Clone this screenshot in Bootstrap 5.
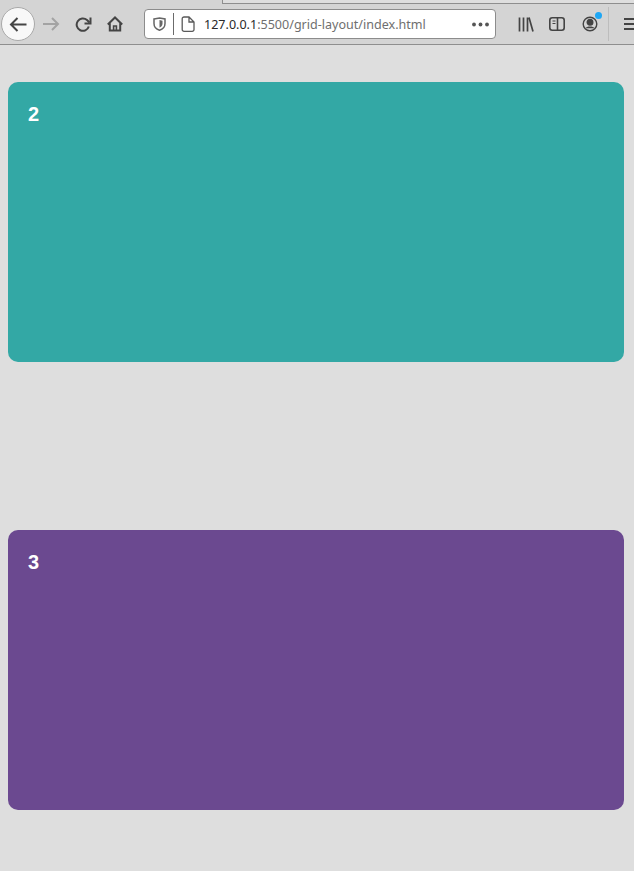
<!DOCTYPE html>
<html lang="en">
<head>
<meta charset="utf-8">
<title>Grid layout</title>
<link rel="stylesheet" href="https://cdn.jsdelivr.net/npm/bootstrap@5.3.0/dist/css/bootstrap.min.css">
<style>
html,body{height:100%;overflow:hidden}
body{background:#dedede;font-family:"Liberation Sans",sans-serif}
.chrome-bar{height:45px;background:#d4d4d4;border-bottom:1px solid #8e8e8e;position:relative;overflow:hidden;padding:4px 0 0 1px}
.tab-edge{position:absolute;left:222px;right:0;top:0;height:4px;background:#dedede;border:1px solid #8e8e8e;border-width:0 0 1px 1px}
.back-btn{width:34px;height:34px;flex:none;border-radius:50%;background:#f8f8f8;border:1px solid #a9a9a9}
.ico-fwd{margin-left:8px}
.ico-reload{margin-left:15px}
.ico-home{margin-left:15px}
.ico-lib{margin-left:22px}
.ico-side{margin-left:15px}
.ico-prof{margin-left:17px}
.ico-menu{margin-left:15px}
svg{flex:none;display:block}
.url-box{margin-left:21px;width:352px;height:30px;flex:none;background:#fff;border:1px solid #8c8c8c;border-radius:4px;font-family:"Noto Sans",sans-serif;font-size:12.55px;line-height:28px;color:#6f6f6f;padding-left:8px}
.url-text{margin-left:9px;padding-top:1px;white-space:nowrap;flex:1}
.url-host{color:#2a2a2a}
.url-sep{width:1px;height:22px;background:#6b6b6b;margin:0 7px 0 7px}
.url-dots{margin-right:6px}
.prof-wrap{position:relative}
.prof-dot{position:absolute;right:-4px;top:-4px;width:7px;height:7px;border-radius:50%;background:#1ea7f5}
.bar-sep{width:1px;height:34px;flex:none;background:#bdbdbd;margin-left:10px}
.page-stack{padding:37px 10px 0 8px;gap:168px}
.grid-tile{height:280px;border-radius:10px;padding:20px;color:#fff;font-size:20px;font-weight:700;line-height:24px}
.tile-teal{background:#33a8a5}
.tile-purple{background:#6b4990}
</style>
</head>
<body>
<header class="chrome-bar d-flex align-items-center">
  <div class="tab-edge"></div>
  <div class="back-btn d-flex align-items-center justify-content-center">
    <svg width="18" height="15" viewBox="0 0 18 15" fill="none" stroke="#444" stroke-width="2"><path d="M17.500 7.500H2M8.500 1 2 7.500 8.500 14"/></svg>
  </div>
  <svg class="ico-fwd" width="17" height="14" viewBox="0 0 17 14" fill="none" stroke="#a3a3a3" stroke-width="2"><path d="M0 7h15M9 1l6 6-6 6"/></svg>
  <svg class="ico-reload" width="17" height="15" viewBox="0 0 17 15" fill="none" stroke="#444" stroke-width="2"><path d="M13.800 9.500A6.200 6.200 0 1 1 12 3L14.500 5.500"/><path d="M15.500 .5v6h-6"/></svg>
  <svg class="ico-home" width="16" height="16" viewBox="0 0 16 16" fill="none" stroke="#444" stroke-width="2"><path d="M.8 8.500 8 1.500l7.200 7M2.800 7v7.500h10.400V7"/><path d="M6.600 14.500v-4.500h2.800v4.500" stroke-width="1.600"/></svg>
  <div class="url-box d-flex align-items-center">
    <svg width="13" height="14" viewBox="0 0 13 14" fill="none"><path d="M1 2 6.500 1 12 2v4.500c0 3.500-2.500 5.800-5.500 6.700C3.500 12.300 1 10 1 6.500z" stroke="#666" stroke-width="1.500"/><path d="M6.500 3 9.500 3.700v3c0 2-1.500 3.300-3 4z" fill="#666"/></svg>
    <div class="url-sep"></div>
    <svg width="14" height="16" viewBox="0 0 14 16" fill="none" stroke="#5a5a5a" stroke-width="1.300"><path d="M3 1h5l5 5v7.500a1.800 1.800 0 0 1-1.800 1.800H3a1.800 1.800 0 0 1-1.800-1.800V2.800A1.800 1.800 0 0 1 3 1zM8 1v5h5"/></svg>
    <span class="url-text"><span class="url-host">127.0.0.1</span>:5500/grid-layout/index.html</span>
    <svg class="url-dots" width="17" height="5" viewBox="0 0 17 5" fill="#555"><circle cx="2" cy="2.500" r="1.900"/><circle cx="8.500" cy="2.500" r="1.900"/><circle cx="15" cy="2.500" r="1.900"/></svg>
  </div>
  <svg class="ico-lib" width="16" height="15" viewBox="0 0 16 15" fill="none" stroke="#444" stroke-width="1.700"><path d="M1.500 .5v14M5.500 .5v14M9.500 .5v14M11 .5l4 14"/></svg>
  <svg class="ico-side" width="16" height="14" viewBox="0 0 16 14" fill="none" stroke="#444" stroke-width="1.600"><rect x=".8" y=".8" width="14.400" height="12.400" rx="2.500"/><path d="M8.500 .8v12.400"/><path d="M3.500 4h3M3.500 6.500h3" stroke-width="1"/></svg>
  <div class="prof-wrap ico-prof">
    <svg width="16" height="16" viewBox="0 0 16 16" fill="none" stroke="#444" stroke-width="1.400"><circle cx="8" cy="8" r="6.800"/><circle cx="8" cy="6.300" r="2.800" fill="#444"/><path d="M3.400 12.300c1-2.400 8.200-2.400 9.200 0z" fill="#444" stroke="none"/></svg>
    <span class="prof-dot"></span>
  </div>
  <div class="bar-sep"></div>
  <svg class="ico-menu" width="10" height="12" viewBox="0 0 10 12" fill="#444"><rect width="10" height="2"/><rect y="5" width="10" height="2"/><rect y="10" width="10" height="2"/></svg>
</header>
<main class="page-stack d-flex flex-column">
  <div class="grid-tile tile-teal">2</div>
  <div class="grid-tile tile-purple">3</div>
</main>
<script src="https://cdn.jsdelivr.net/npm/bootstrap@5.3.0/dist/js/bootstrap.bundle.min.js"></script>
</body>
</html>
